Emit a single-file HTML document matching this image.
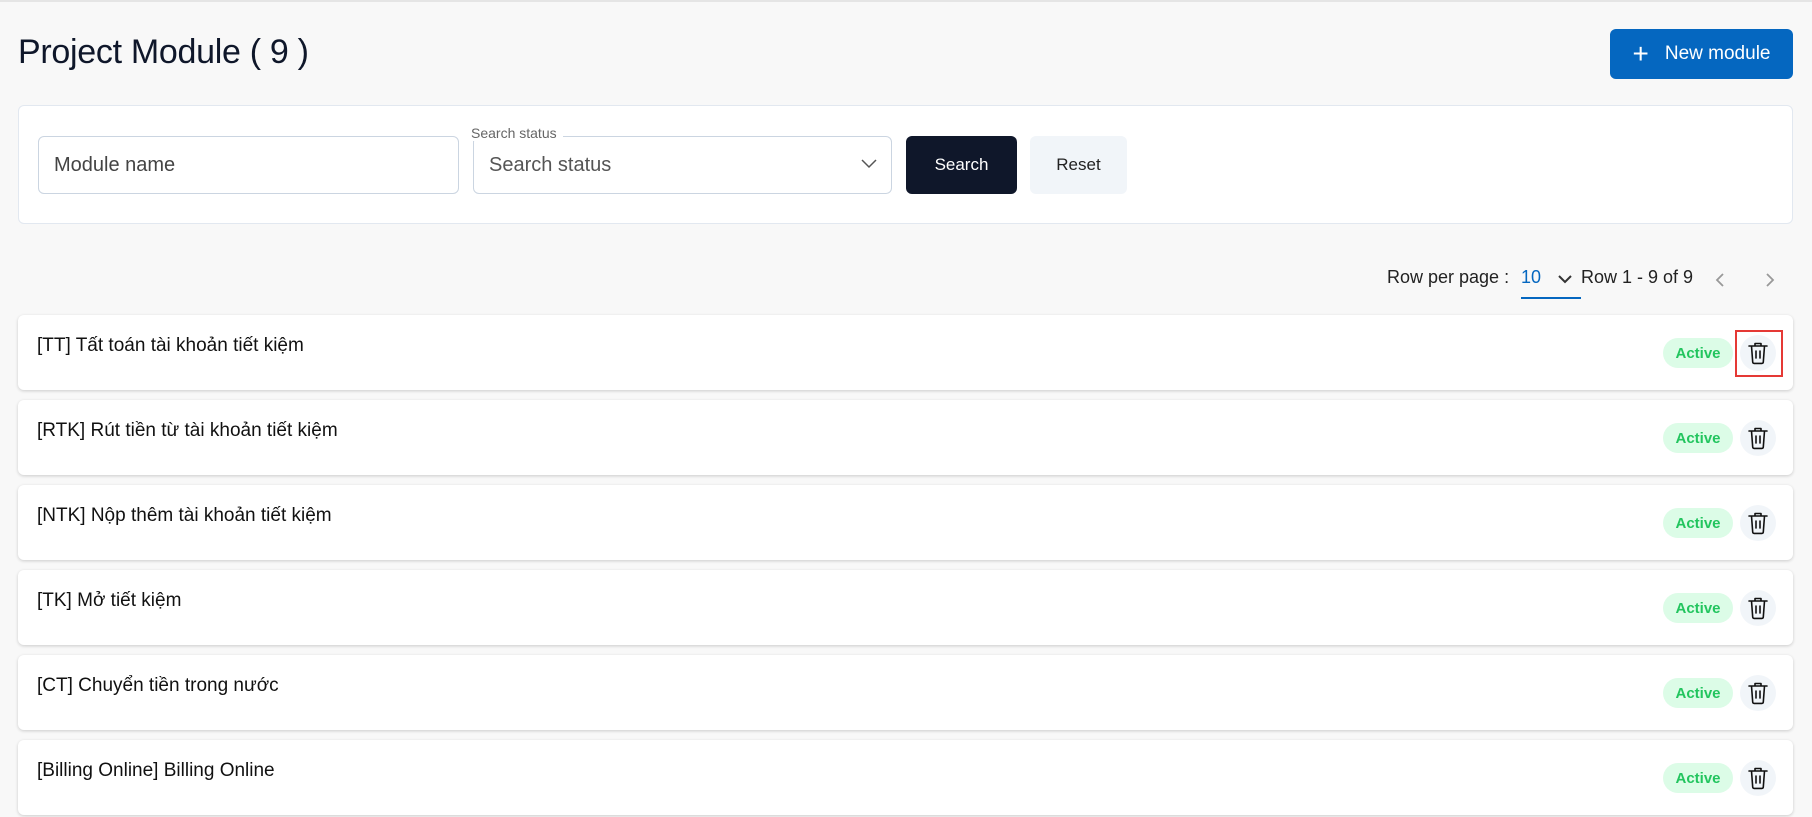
<!DOCTYPE html>
<html><head><meta charset="utf-8"><style>
*{box-sizing:border-box;margin:0;padding:0}
body{width:1812px;height:817px;overflow:hidden;background:#f8f8f8;font-family:"Liberation Sans",sans-serif;color:#0f172a;position:relative;border-top:2px solid #e5e5e5}
.abs{position:absolute}
h1{position:absolute;left:18px;top:31px;font-size:34px;font-weight:500;letter-spacing:-0.3px}
.newbtn{left:1610px;top:27px;width:183px;height:50px;background:#0567c0;border-radius:6px;color:#fff;font-size:19px;display:flex;align-items:center;justify-content:center;gap:16px}
.card{left:18px;top:103px;width:1775px;height:119px;background:#fff;border:1px solid #e2e8f0;border-radius:6px}
.inp{top:134px;height:58px;background:#fff;border:1px solid #cbd5e1;border-radius:6px;font-size:20px;color:#444;display:flex;align-items:center;padding-left:15px}
.lbl{left:471px;top:123px;font-size:14px;color:#666;background:#fff;padding-right:6px}
.btn{top:134px;height:58px;border-radius:6px;font-size:17px;display:flex;align-items:center;justify-content:center}
.pg{top:265px;font-size:18px;color:#222}
.row{left:18px;width:1775px;height:75px;background:#fff;border-radius:6px;box-shadow:0 1px 3px rgba(0,0,0,.18)}
.row .t{position:absolute;left:19px;top:20px;font-size:19px;color:#111}
.badge{position:absolute;left:1645px;top:23px;width:70px;height:30px;border-radius:15px;background:#dcfce7;color:#22c55e;font-weight:bold;font-size:15px;display:flex;align-items:center;justify-content:center}
.tr{position:absolute;left:1722px;top:20px;width:36px;height:36px;border-radius:50%;background:#f1f5f9;display:flex;align-items:center;justify-content:center}
</style></head><body>
<h1>Project Module ( 9 )</h1>
<div class="abs newbtn"><span style="font-size:28px;font-weight:300">+</span><span>New module</span></div>
<div class="abs card"></div>
<div class="abs inp" style="left:38px;width:421px">Module name</div>
<div class="abs inp" style="left:473px;width:419px;color:#555">Search status
<svg style="position:absolute;right:14px;top:22px" width="16" height="10" viewBox="0 0 16 10"><path d="M1 1l7 7 7-7" fill="none" stroke="#555" stroke-width="1.5"/></svg></div>
<div class="abs lbl">Search status</div>
<div class="abs btn" style="left:906px;width:111px;background:#0f172a;color:#fff">Search</div>
<div class="abs btn" style="left:1030px;width:97px;background:#f1f5f9;color:#222">Reset</div>
<div class="abs pg" style="left:1387px">Row per page :</div>
<div class="abs pg" style="left:1521px;color:#0567c0">10</div>
<svg class="abs" style="left:1558px;top:272px" width="14" height="10" viewBox="0 0 14 10"><path d="M1 2l6 6 6-6" fill="none" stroke="#333" stroke-width="2"/></svg>
<div class="abs" style="left:1521px;top:295px;width:60px;height:2px;background:#0567c0"></div>
<div class="abs pg" style="left:1581px">Row 1 - 9 of 9</div>
<svg class="abs" style="left:1714px;top:270px" width="12" height="16" viewBox="0 0 12 16"><path d="M9 2L3 8l6 6" fill="none" stroke="#999" stroke-width="1.8"/></svg>
<svg class="abs" style="left:1764px;top:270px" width="12" height="16" viewBox="0 0 12 16"><path d="M3 2l6 6-6 6" fill="none" stroke="#999" stroke-width="1.8"/></svg>

<div class="abs row" style="top:313px"><div class="t">[TT] Tất toán tài khoản tiết kiệm</div><div class="badge">Active</div><div class="tr"><svg width="22" height="24" viewBox="0 0 22 24"><path d="M2 5h18M8 5V2.5h6V5M4.5 5l1.2 16a1.5 1.5 0 0 0 1.5 1.4h7.6a1.5 1.5 0 0 0 1.5-1.4L17.5 5M9 10v7M13 10v7" fill="none" stroke="#111" stroke-width="1.6" stroke-linecap="round" stroke-linejoin="round"/></svg></div>
<div style="position:absolute;left:1717px;top:15px;width:48px;height:47px;border:2px solid #e53935"></div></div>
<div class="abs row" style="top:398px"><div class="t">[RTK] Rút tiền từ tài khoản tiết kiệm</div><div class="badge">Active</div><div class="tr"><svg width="22" height="24" viewBox="0 0 22 24"><path d="M2 5h18M8 5V2.5h6V5M4.5 5l1.2 16a1.5 1.5 0 0 0 1.5 1.4h7.6a1.5 1.5 0 0 0 1.5-1.4L17.5 5M9 10v7M13 10v7" fill="none" stroke="#111" stroke-width="1.6" stroke-linecap="round" stroke-linejoin="round"/></svg></div></div>
<div class="abs row" style="top:483px"><div class="t">[NTK] Nộp thêm tài khoản tiết kiệm</div><div class="badge">Active</div><div class="tr"><svg width="22" height="24" viewBox="0 0 22 24"><path d="M2 5h18M8 5V2.5h6V5M4.5 5l1.2 16a1.5 1.5 0 0 0 1.5 1.4h7.6a1.5 1.5 0 0 0 1.5-1.4L17.5 5M9 10v7M13 10v7" fill="none" stroke="#111" stroke-width="1.6" stroke-linecap="round" stroke-linejoin="round"/></svg></div></div>
<div class="abs row" style="top:568px"><div class="t">[TK] Mở tiết kiệm</div><div class="badge">Active</div><div class="tr"><svg width="22" height="24" viewBox="0 0 22 24"><path d="M2 5h18M8 5V2.5h6V5M4.5 5l1.2 16a1.5 1.5 0 0 0 1.5 1.4h7.6a1.5 1.5 0 0 0 1.5-1.4L17.5 5M9 10v7M13 10v7" fill="none" stroke="#111" stroke-width="1.6" stroke-linecap="round" stroke-linejoin="round"/></svg></div></div>
<div class="abs row" style="top:653px"><div class="t">[CT] Chuyển tiền trong nước</div><div class="badge">Active</div><div class="tr"><svg width="22" height="24" viewBox="0 0 22 24"><path d="M2 5h18M8 5V2.5h6V5M4.5 5l1.2 16a1.5 1.5 0 0 0 1.5 1.4h7.6a1.5 1.5 0 0 0 1.5-1.4L17.5 5M9 10v7M13 10v7" fill="none" stroke="#111" stroke-width="1.6" stroke-linecap="round" stroke-linejoin="round"/></svg></div></div>
<div class="abs row" style="top:738px"><div class="t">[Billing Online] Billing Online</div><div class="badge">Active</div><div class="tr"><svg width="22" height="24" viewBox="0 0 22 24"><path d="M2 5h18M8 5V2.5h6V5M4.5 5l1.2 16a1.5 1.5 0 0 0 1.5 1.4h7.6a1.5 1.5 0 0 0 1.5-1.4L17.5 5M9 10v7M13 10v7" fill="none" stroke="#111" stroke-width="1.6" stroke-linecap="round" stroke-linejoin="round"/></svg></div></div>
</body></html>
